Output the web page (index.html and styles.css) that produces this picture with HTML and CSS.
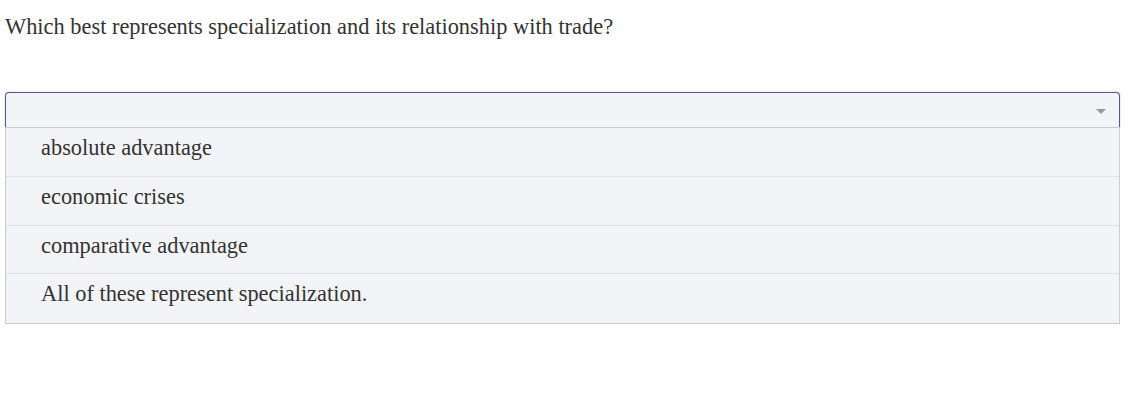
FILE: index.html
```html
<!DOCTYPE html>
<html lang="en">
<head>
    <meta charset="UTF-8">
    <title>Question</title>
    <link rel="stylesheet" href="styles.css">
</head>
<body>
    <div class="question">
        <p class="question-text">Which best represents specialization and its relationship with trade?</p>

        <div class="dropdown">
            <div class="dropdown-control">
                <span class="dropdown-arrow"></span>
            </div>
            <div class="dropdown-menu">
                <div class="dropdown-option">absolute advantage</div>
                <div class="dropdown-option">economic crises</div>
                <div class="dropdown-option">comparative advantage</div>
                <div class="dropdown-option">All of these represent specialization.</div>
            </div>
        </div>
    </div>
</body>
</html>
```

FILE: styles.css
```css
body {
    margin: 0;
    padding: 0 5px;
    font-family: 'Liberation Serif', 'Times New Roman', serif;
    font-size: 22.4px;
    color: #333;
    background: #fff;
}

.question {
    width: 1115px;
}

.question-text {
    margin: 0;
    padding-top: 14px;
    line-height: 26px;
}

.dropdown {
    margin-top: 52px;
}

.dropdown-control {
    height: 34px;
    border: 1px solid #58578f;
    border-bottom: none;
    border-radius: 4px 4px 0 0;
    background: #f3f4f8;
    box-shadow: 0 0 2px rgba(88, 87, 143, 0.35);
    display: flex;
    align-items: center;
    justify-content: flex-end;
    padding-right: 13px;
}

.dropdown-arrow {
    width: 0;
    height: 0;
    border-left: 5px solid transparent;
    border-right: 5px solid transparent;
    border-top: 5px solid #999;
    margin-top: 3px;
}

.dropdown-menu {
    border: 1px solid #ccc;
    background: #f3f4f8;
}

.dropdown-option {
    height: 48px;
    box-sizing: border-box;
    padding: 7px 0 0 35px;
    line-height: 26px;
    color: #333;
}

.dropdown-option + .dropdown-option {
    height: 48.7px;
    border-top: 1px solid #e0e1e6;
}

.dropdown-option:last-child {
    height: 49.7px;
}
```
